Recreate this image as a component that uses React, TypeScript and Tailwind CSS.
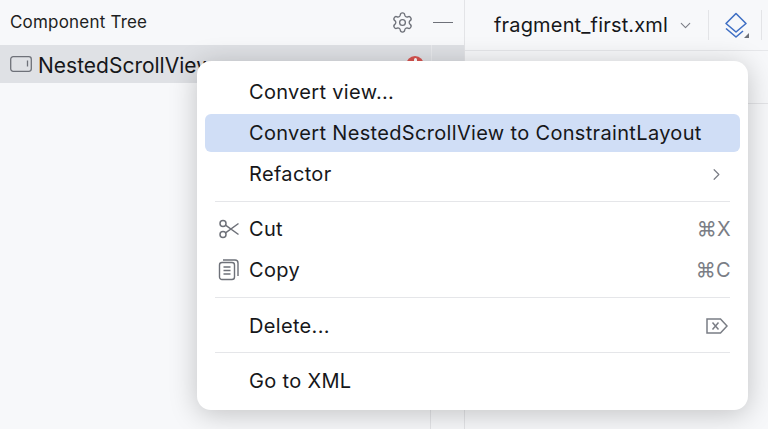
import { ChevronDown, ChevronRight, Settings } from "lucide-react";

function Scissors() {
  return (
    <svg width="22" height="22" viewBox="0 0 22 22" fill="none" stroke="#6e7179" strokeWidth="1.5">
      <circle cx="5" cy="5.5" r="3" />
      <circle cx="5" cy="16.5" r="3" />
      <path d="M7.5 7.2 20.5 16.5M7.5 14.8 20.5 5.5" />
    </svg>
  );
}

function CopyIcon() {
  return (
    <svg width="22" height="22" viewBox="0 0 22 22" fill="none" stroke="#6e7179" strokeWidth="1.4">
      <rect x="1.5" y="3.5" width="15" height="17" rx="2.5" />
      <path d="M5 1h12a3 3 0 0 1 3 3v13" />
      <path d="M5.5 8h7M5.5 11.5h7M5.5 15h7" />
    </svg>
  );
}

function DeleteKey() {
  return (
    <svg width="22" height="16" viewBox="0 0 22 16" fill="none" stroke="#7a7d85" strokeWidth="1.5">
      <path d="M1 1h13.5l6.5 7-6.5 7H1z" />
      <path d="m6.5 4.5 6 7M12.5 4.5l-6 7" />
    </svg>
  );
}

function LayersIcon() {
  return (
    <svg width="28" height="28" viewBox="0 0 28 28" fill="none">
      <path d="M13 2.5 23 12.5 13 21 3 12.5z" stroke="#3f6fc4" strokeWidth="1.6" strokeLinejoin="round" />
      <path d="M3 17.5 13 26l7-6" stroke="#3f6fc4" strokeWidth="1.6" strokeLinejoin="round" />
      <path d="M26 22v5h-5z" fill="#6e7179" />
    </svg>
  );
}

function ViewIcon() {
  return (
    <svg width="22" height="16" viewBox="0 0 22 16" fill="none" stroke="#6e7179" strokeWidth="1.3">
      <rect x="0.7" y="0.7" width="20.6" height="14.6" rx="2.5" fill="#dfe1e5" />
      <path d="M17.5 4.5v6" />
    </svg>
  );
}

function Item({ label, icon, right, active }: { label: string; icon?: React.ReactNode; right?: React.ReactNode; active?: boolean }) {
  return (
    <div className={`mx-2 flex h-[38px] items-center rounded-md pr-[9px] ${active ? "bg-[#d0def6]" : ""}`}>
      <div className="flex w-[44px] shrink-0 items-center justify-end pr-[9px]">{icon}</div>
      <span className="text-[20px] tracking-[0.33px] text-[#16171a]">{label}</span>
      {right && <div className="ml-auto flex items-center">{right}</div>}
    </div>
  );
}

function Divider() {
  return <div className="mx-[18px] my-[8px] h-px bg-[#e5e6e9]" />;
}

export default function App() {
  return (
    <div className="relative h-[429px] w-[768px] overflow-hidden bg-[#f7f8fa] font-['Inter',sans-serif]">
      <div className="flex h-full">
        <div className="flex h-full w-[465px] flex-col border-r border-[#e3e4e7]">
          <div className="flex h-[45px] items-center pl-[10px] pr-[11px]">
            <span className="text-[17px] tracking-[0.2px] text-[#1d1e21]">Component Tree</span>
            <Settings size={23} strokeWidth={1.4} className="ml-auto text-[#6e7179]" />
            <div className="ml-[19px] h-[1.5px] w-[20px] bg-[#6e7179]" />
          </div>
          <div className="flex h-[38px] items-center bg-[#dfe1e5] pl-[10px]">
            <ViewIcon />
            <span className="ml-[6px] pt-[3px] text-[21px] text-[#16171a]">NestedScrollView</span>
            <div className="ml-[193px] mt-[2px] flex h-[18px] w-[18px] justify-center rounded-full bg-[#d9534f] pt-[2px]">
              <div className="h-[8px] w-[3px] rounded-sm bg-white" />
            </div>
            <div className="ml-[7px] h-full w-px bg-[#e9eaed]" />
          </div>
          <div className="mr-[33px] flex-1 border-r border-[#e3e4e7]" />
        </div>
        <div className="flex h-full flex-1 flex-col bg-[#f7f8fa]">
          <div className="flex h-[51px] items-center border-b border-[#e6e7ea] pl-[29px]">
            <span className="text-[20px] tracking-[0.17px] text-[#16171a]">fragment_first.xml</span>
            <ChevronDown size={17} strokeWidth={1.5} className="ml-[9px] text-[#7a7d85]" />
            <div className="ml-[14px] h-[30px] w-px bg-[#e3e4e7]" />
            <div className="ml-[14px]"><LayersIcon /></div>
            <div className="ml-[10px] h-[30px] w-px bg-[#e3e4e7]" />
          </div>
          <div className="mt-[52px] h-px bg-[#e3e4e7]" />
        </div>
      </div>

      <div className="absolute left-[197px] top-[61px] h-[349px] w-[551px] rounded-[14px] bg-white pt-[12px] shadow-[0_4px_28px_rgba(0,0,0,0.22)]">
        <Item label="Convert view..." />
        <div className="mt-[3px]"><Item label="Convert NestedScrollView to ConstraintLayout" active /></div>
        <div className="mt-[3px]">
          <Item label="Refactor" right={<ChevronRight size={19} strokeWidth={1.5} className="mr-[5px] text-[#7a7d85]" />} />
        </div>
        <Divider />
        <Item label="Cut" icon={<Scissors />} right={<span className="text-[20px] tracking-[0.3px] text-[#7a7d85]">⌘X</span>} />
        <div className="mt-[3px]">
          <Item label="Copy" icon={<CopyIcon />} right={<span className="text-[20px] tracking-[0.3px] text-[#7a7d85]">⌘C</span>} />
        </div>
        <Divider />
        <div className="pt-[1px]">
          <Item label="Delete..." right={<div className="mr-[3px]"><DeleteKey /></div>} />
        </div>
        <div className="-mt-[1px]"><Divider /></div>
        <div className="pt-[1px]"><Item label="Go to XML" /></div>
      </div>
    </div>
  );
}
